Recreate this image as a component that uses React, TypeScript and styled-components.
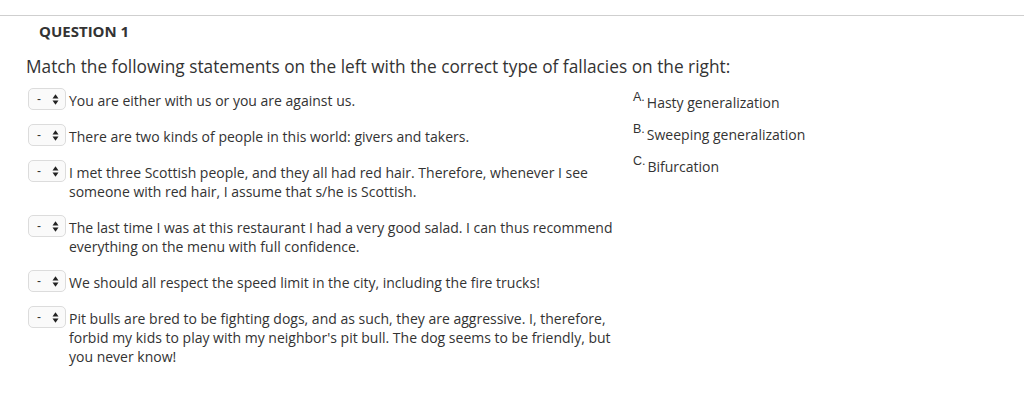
import React from 'react';
import styled, { createGlobalStyle } from 'styled-components';

const GlobalStyle = createGlobalStyle`
  html, body {
    margin: 0;
    padding: 0;
    background: #fff;
  }
  body {
    font-family: "Open Sans", "Liberation Sans", sans-serif;
    color: #333;
  }
`;

const statements = [
  'You are either with us or you are against us.',
  'There are two kinds of people in this world: givers and takers.',
  'I met three Scottish people, and they all had red hair. Therefore, whenever I see someone with red hair, I assume that s/he is Scottish.',
  'The last time I was at this restaurant I had a very good salad. I can thus recommend everything on the menu with full confidence.',
  'We should all respect the speed limit in the city, including the fire trucks!',
  "Pit bulls are bred to be fighting dogs, and as such, they are aggressive. I, therefore, forbid my kids to play with my neighbor's pit bull. The dog seems to be friendly, but you never know!",
];

const answers = [
  { letter: 'A.', text: 'Hasty generalization' },
  { letter: 'B.', text: 'Sweeping generalization' },
  { letter: 'C.', text: 'Bifurcation' },
];

const Page = styled.div`
  padding-top: 15px;
`;

const Question = styled.section`
  border-top: 1px solid #cfcfcf;
  padding: 5px 0 0 26px;
`;

const Title = styled.h3`
  margin: 0 0 0 13px;
  font-size: 15px;
  line-height: 20px;
  font-weight: 700;
  color: #333;
`;

const Prompt = styled.p`
  margin: 14px 0 0;
  font-size: 17.3px;
  line-height: 24px;
  color: #333;
`;

const Columns = styled.div`
  display: grid;
  grid-template-columns: 607px 1fr;
  margin-top: 9px;
`;

const StatementList = styled.ul`
  list-style: none;
  margin: 0;
  padding: 0 0 0 2px;
  display: flex;
  flex-direction: column;
  gap: 14px;
`;

const Statement = styled.li`
  display: flex;
  align-items: flex-start;
  gap: 3px;
`;

const Select = styled.div`
  flex: none;
  box-sizing: border-box;
  width: 38px;
  height: 22px;
  border: 1px solid #dcdcdc;
  border-radius: 5px;
  background: #fafafa;
  display: flex;
  align-items: center;
  justify-content: space-between;
  padding: 0 6px 0 8px;
  font-family: "Liberation Sans", Arial, sans-serif;
  font-size: 12px;
  color: #333;
`;

const StatementText = styled.span`
  font-size: 14px;
  line-height: 19px;
  color: #333;
  padding-top: 3px;
  max-width: 550px;
`;

const AnswerList = styled.ol`
  list-style: none;
  margin: 0;
  padding: 3px 0 0;
  display: flex;
  flex-direction: column;
  gap: 11px;
`;

const Answer = styled.li`
  display: flex;
  align-items: flex-start;
  font-size: 14px;
  line-height: 19px;
  color: #333;
`;

const Letter = styled.span`
  font-family: "Liberation Sans", Arial, sans-serif;
  font-size: 12.5px;
  line-height: 12px;
  margin-right: 2px;
`;

const AnswerText = styled.span`
  padding-top: 2px;
`;

const Arrows = () => (
  <svg width="7" height="11" viewBox="0 0 7 11">
    <path d="M3.5 0.3 L6.5 4.4 L0.5 4.4 Z" fill="#222" />
    <path d="M3.5 10.7 L6.5 6.6 L0.5 6.6 Z" fill="#222" />
  </svg>
);

export default function App() {
  return (
    <Page>
      <GlobalStyle />
      <Question>
        <Title>QUESTION 1</Title>
        <Prompt>Match the following statements on the left with the correct type of fallacies on the right:</Prompt>
        <Columns>
          <StatementList>
            {statements.map((s) => (
              <Statement key={s}>
                <Select>
                  <span>-</span>
                  <Arrows />
                </Select>
                <StatementText>{s}</StatementText>
              </Statement>
            ))}
          </StatementList>
          <AnswerList>
            {answers.map((a) => (
              <Answer key={a.letter}>
                <Letter>{a.letter}</Letter>
                <AnswerText>{a.text}</AnswerText>
              </Answer>
            ))}
          </AnswerList>
        </Columns>
      </Question>
    </Page>
  );
}
